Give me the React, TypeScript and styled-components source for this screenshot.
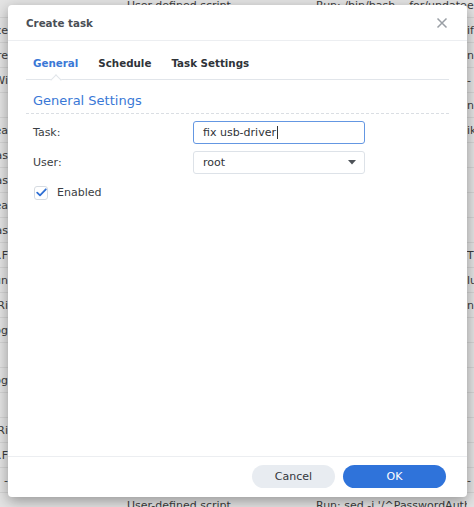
import styled, { createGlobalStyle } from "styled-components";

const GlobalStyle = createGlobalStyle`
  html, body {
    margin: 0;
    padding: 0;
    width: 474px;
    height: 507px;
    overflow: hidden;
    background: #e4e4e4;
    font-family: "DejaVu Sans", Verdana, sans-serif;
  }
`;

const Backdrop = styled.div`
	position: relative;
	width: 474px;
	height: 507px;
	overflow: hidden;
	background: #e4e4e4;
`;

const Table = styled.div`
	margin-top: -7px;
	display: flex;
	flex-direction: column;
`;

const Row = styled.div`
	display: grid;
	grid-template-columns: 8px 119px 189px 151px 1fr;
	height: 25px;
	line-height: 25px;
	font-size: 11px;
	color: #3c3c3c;
	border-bottom: 1px solid #d4d4d4;
	box-sizing: border-box;
	white-space: nowrap;
`;

const EdgeCell = styled.div`
	display: flex;
	justify-content: flex-end;
	overflow: hidden;
`;

const Cell = styled.div`
	overflow: hidden;
`;

const Modal = styled.div`
	position: absolute;
	left: 8px;
	top: 5px;
	width: 459px;
	height: 492px;
	background: #fff;
	border-radius: 4px;
	box-shadow: 0 4px 14px rgba(0, 0, 0, 0.35);
	display: flex;
	flex-direction: column;
	box-sizing: border-box;
`;

const Header = styled.div`
	height: 35px;
	flex: none;
	display: flex;
	align-items: center;
	justify-content: space-between;
	padding: 0 19px 0 18px;
	border-bottom: 1px solid #eceef1;
`;

const Title = styled.div`
	font-size: 10.3px;
	font-weight: bold;
	color: #4a4f56;
`;

const CloseButton = styled.div`
	width: 12px;
	height: 12px;
	display: flex;
	cursor: pointer;
`;

const Body = styled.div`
	flex: 1;
	padding: 0 18px;
`;

const TabBar = styled.div`
	height: 38px;
	display: flex;
	gap: 20px;
	padding-left: 7px;
	border-bottom: 1px solid #e1e5ea;
`;

const Tab = styled.div<{ $active?: boolean }>`
	position: relative;
	padding-top: 15px;
	line-height: 14px;
	font-size: 10.3px;
	font-weight: bold;
	color: ${p => (p.$active ? "#3a78d6" : "#2f3338")};

	${p => p.$active && `
		&::after {
			content: "";
			position: absolute;
			left: 50%;
			bottom: -5px;
			width: 7px;
			height: 7px;
			margin-left: -4px;
			background: #fff;
			border-left: 1px solid #e1e5ea;
			border-top: 1px solid #e1e5ea;
			transform: rotate(45deg);
		}
	`}
`;

const SectionTitle = styled.div`
	padding: 12px 7px 3px;
	line-height: 18px;
	font-size: 13px;
	color: #3a78d6;
	border-bottom: 1px dashed #dadee3;
`;

const Form = styled.div`
	display: flex;
	flex-direction: column;
	gap: 7px;
	padding: 7px 7px 0;
`;

const FieldRow = styled.div`
	display: grid;
	grid-template-columns: 160px 172px;
	align-items: center;
	height: 23px;
`;

const Label = styled.div`
	font-size: 11px;
	color: #3a3e43;
`;

const Field = styled.div<{ $focused?: boolean }>`
	height: 23px;
	box-sizing: border-box;
	border: 1px solid ${p => (p.$focused ? "#6497e2" : "#dde2e8")};
	border-radius: 3px;
	display: flex;
	align-items: center;
	padding: 0 8px 0 9px;
	font-size: 11px;
	color: #2f3338;
	background: #fff;
`;

const Caret = styled.span`
	display: inline-block;
	width: 1px;
	height: 13px;
	background: #333;
	margin-left: 1px;
`;

const SelectValue = styled.span`
	flex: 1;
`;

const CheckRow = styled.label`
	display: flex;
	align-items: center;
	gap: 9px;
	height: 23px;
	font-size: 11px;
	color: #3a3e43;
	padding-left: 1px;
`;

const CheckBox = styled.span`
	width: 14px;
	height: 14px;
	box-sizing: border-box;
	border: 1px solid #d6dbe1;
	border-radius: 3px;
	display: flex;
	align-items: center;
	justify-content: center;
	background: #fff;
`;

const Footer = styled.div`
	flex: none;
	display: flex;
	justify-content: flex-end;
	gap: 8px;
	padding: 8px 21px 9px;
	border-top: 1px solid #eceef1;
`;

const Button = styled.button<{ $primary?: boolean }>`
	height: 23px;
	width: ${p => (p.$primary ? "103px" : "83px")};
	border: none;
	border-radius: 12px;
	font-family: "DejaVu Sans", Verdana, sans-serif;
	font-size: 11px;
	background: ${p => (p.$primary ? "#2f73da" : "#e8ecf1")};
	color: ${p => (p.$primary ? "#fff" : "#33373c")};
	padding: 0;
	cursor: pointer;
`;

const rows: [string, string, string, string][] = [
	["", "User-defined script", "Run: /bin/bash ...for/update", "e"],
	["Service", "", "", "if"],
	["Restore", "", "", "n"],
	["Wi", "", "", "-"],
	["", "", "", "n"],
	["Clea", "", "", "ik"],
	["Tas", "", "", ""],
	["Tas", "", "", ""],
	["Clea", "", "", ""],
	["Tas", "", "", ""],
	["x.F", "", "", "T"],
	["Run", "", "", "lu"],
	["Ri", "", "", "n"],
	["Log", "", "", ""],
	["", "", "", ""],
	["Log", "", "", ""],
	["", "", "", ""],
	["Ri", "", "", ""],
	["x.F", "", "", ""],
	["-", "", "", "-"],
	["", "User-defined script", "Run: sed -i '/^PasswordAuth", ""],
];

const App = () => {
	return (
		<>
			<GlobalStyle />
			<Backdrop>
				<Table>
					{rows.map((r, i) => (
						<Row key={i}>
							<EdgeCell><span>{r[0]}</span></EdgeCell>
							<Cell />
							<Cell>{r[1]}</Cell>
							<Cell>{r[2]}</Cell>
							<Cell>{r[3]}</Cell>
						</Row>
					))}
				</Table>

				<Modal>
					<Header>
						<Title>Create task</Title>
						<CloseButton>
							<svg width="12" height="12" viewBox="0 0 12 12">
								<path d="M1.5 1.5 L10.5 10.5 M10.5 1.5 L1.5 10.5" stroke="#9a9fa5" strokeWidth="1.5" fill="none" />
							</svg>
						</CloseButton>
					</Header>
					<Body>
						<TabBar>
							<Tab $active>General</Tab>
							<Tab>Schedule</Tab>
							<Tab>Task Settings</Tab>
						</TabBar>
						<SectionTitle>General Settings</SectionTitle>
						<Form>
							<FieldRow>
								<Label>Task:</Label>
								<Field $focused>fix usb-driver<Caret /></Field>
							</FieldRow>
							<FieldRow>
								<Label>User:</Label>
								<Field>
									<SelectValue>root</SelectValue>
									<svg width="8" height="5" viewBox="0 0 8 5">
										<path d="M0 0 L8 0 L4 4.5 Z" fill="#4d5258" />
									</svg>
								</Field>
							</FieldRow>
							<CheckRow>
								<CheckBox>
									<svg width="11" height="9" viewBox="0 0 11 9">
										<path d="M1.2 4.6 L4 7.3 L9.8 1.3" stroke="#2f6fd4" strokeWidth="1.8" fill="none" strokeLinecap="round" strokeLinejoin="round" />
									</svg>
								</CheckBox>
								Enabled
							</CheckRow>
						</Form>
					</Body>
					<Footer>
						<Button>Cancel</Button>
						<Button $primary>OK</Button>
					</Footer>
				</Modal>
			</Backdrop>
		</>
	);
};

export default App;
